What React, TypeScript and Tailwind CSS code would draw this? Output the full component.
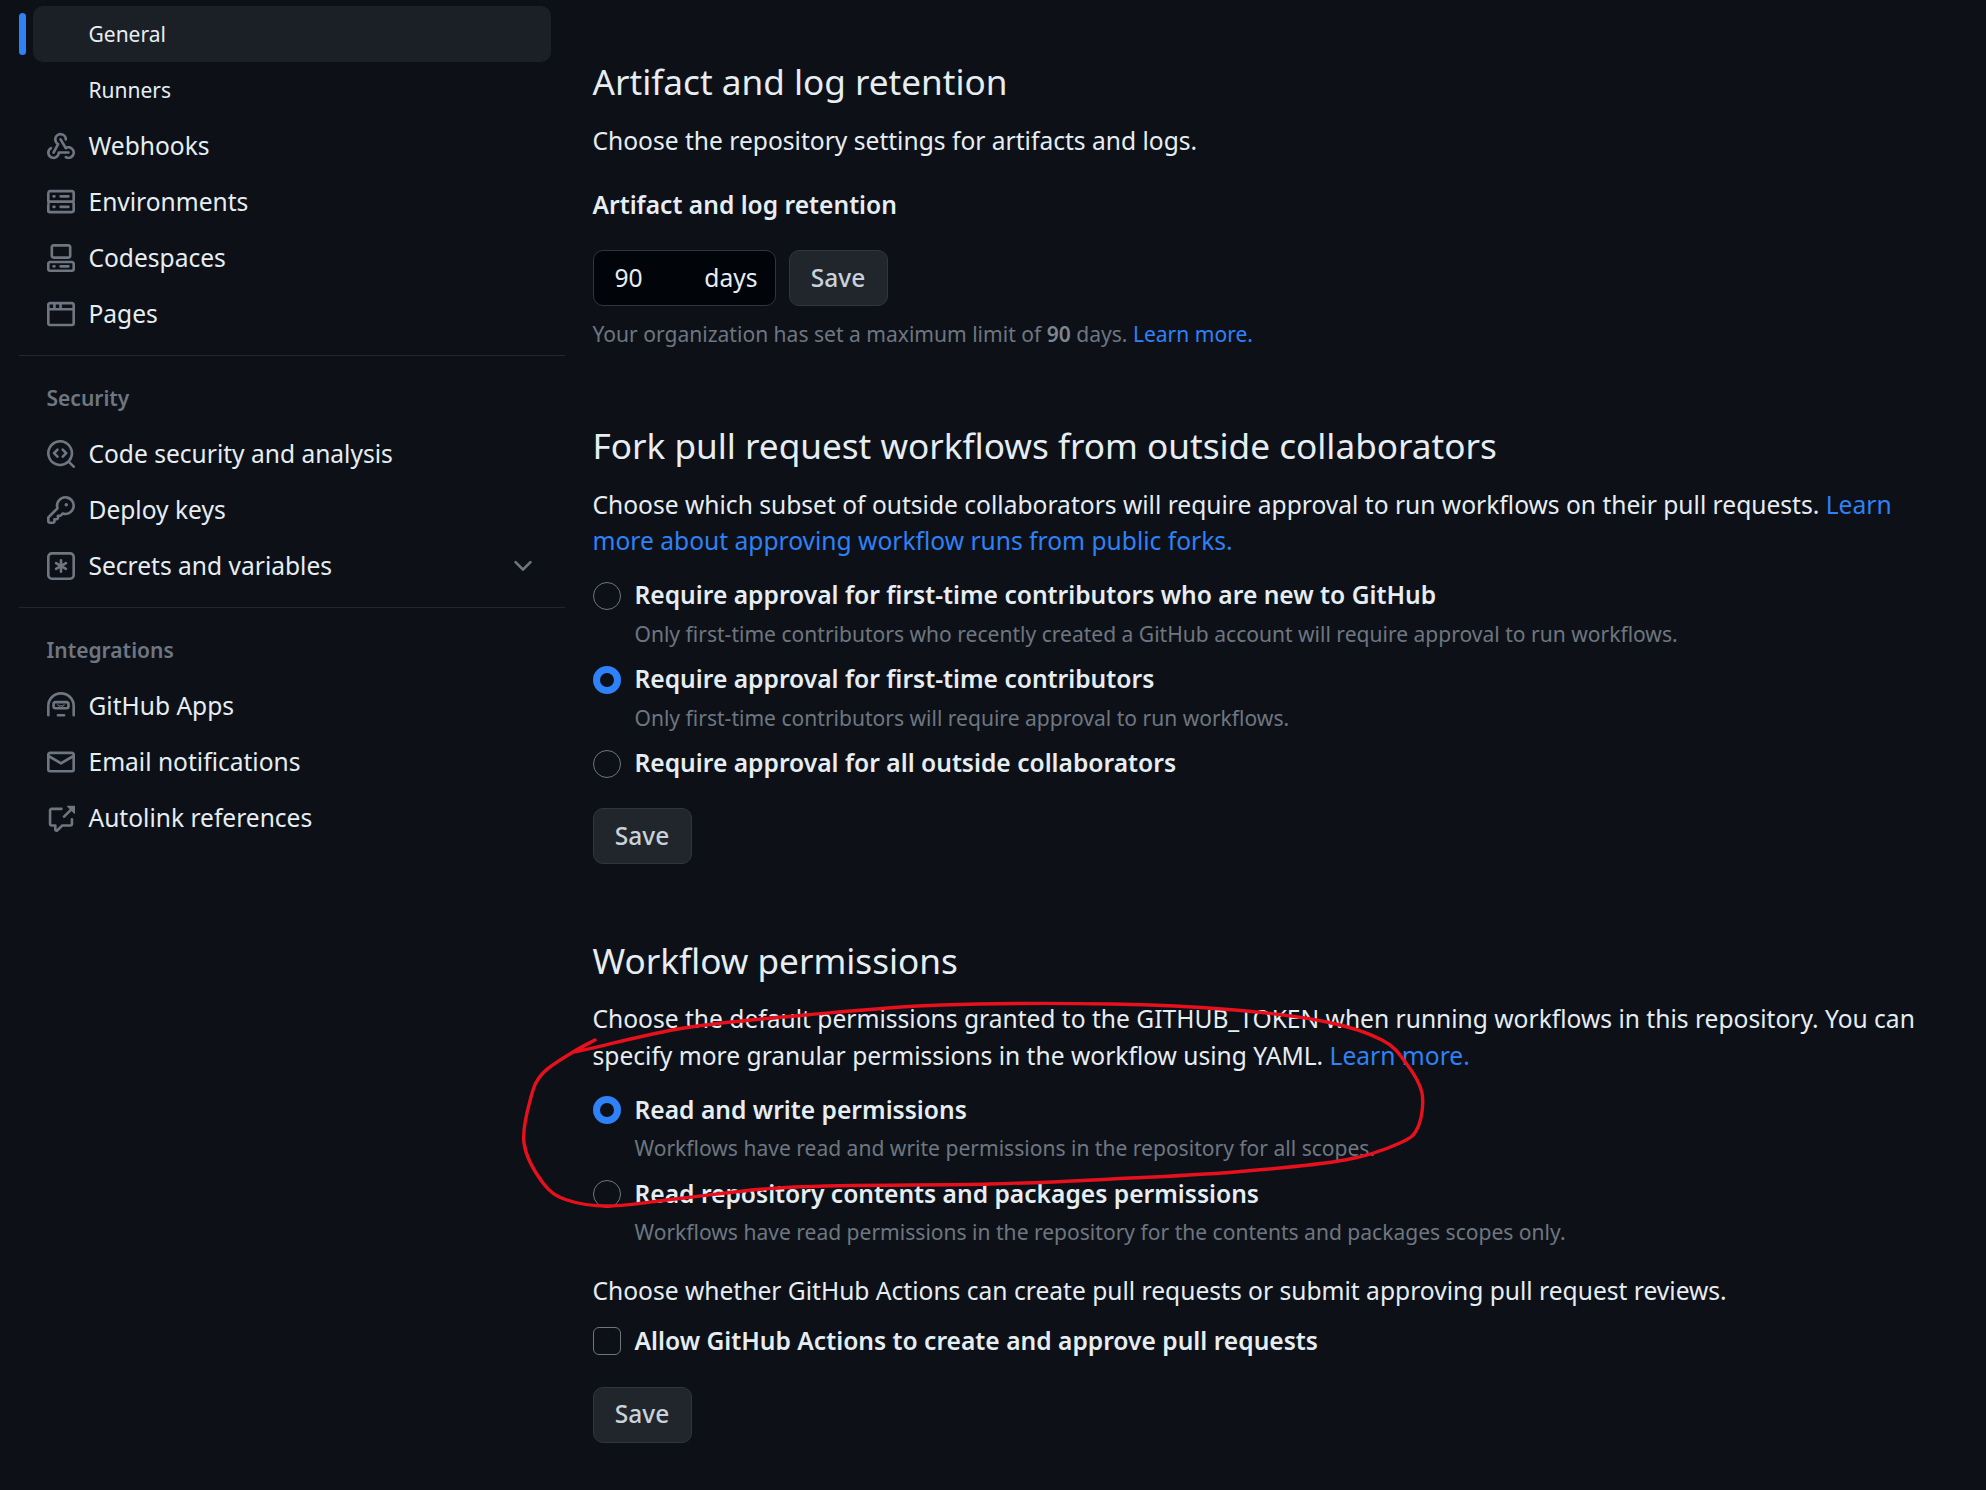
import React from "react";

const pts: [number, number][] = [[595,1040],[573,1052],[684,1028],[806,1015],[941,1005],[1112,1004],[1235,1010],[1327,1022],[1382,1040],[1406,1063],[1422,1093],[1418,1127],[1400,1143],[1345,1160],[1235,1172],[1112,1179],[990,1184],[794,1187],[684,1198],[610,1206],[567,1200],[543,1183],[524,1143],[531,1097],[543,1073],[573,1052],[595,1040]];

function smooth(p: [number, number][]) {
  let d = `M${p[0][0]} ${p[0][1]}`;
  for (let i = 0; i < p.length - 1; i++) {
    const a = p[Math.max(0, i - 1)], b = p[i], c = p[i + 1], e = p[Math.min(p.length - 1, i + 2)];
    if (i < 1) { d += ` L${c[0]} ${c[1]}`; continue; }
    d += ` C${b[0] + (c[0] - a[0]) / 6} ${b[1] + (c[1] - a[1]) / 6} ${c[0] - (e[0] - b[0]) / 6} ${c[1] - (e[1] - b[1]) / 6} ${c[0]} ${c[1]}`;
  }
  return d;
}

const ICONS: Record<string, string[]> = {
  webhook: [
    "M5.5 4.25a2.25 2.25 0 0 1 4.5 0 .75.75 0 0 0 1.5 0 3.75 3.75 0 1 0-6.14 2.889l-2.272 4.258a.75.75 0 0 0 1.324.706L7 7.25a.75.75 0 0 0-.309-1.015A2.25 2.25 0 0 1 5.5 4.25Z",
    "M7.364 3.607a.75.75 0 0 1 1.03.257l2.608 4.349a3.75 3.75 0 1 1-.628 6.785.75.75 0 0 1 .752-1.299 2.25 2.25 0 1 0-.033-3.88.75.75 0 0 1-1.03-.256L7.107 4.636a.75.75 0 0 1 .257-1.03Z",
    "M2.9 8.776A.75.75 0 0 1 2.625 9.8 2.25 2.25 0 1 0 6 11.75a.75.75 0 0 1 .75-.751h5.5a.75.75 0 0 1 0 1.5H7.425a3.751 3.751 0 1 1-5.55-3.998.75.75 0 0 1 1.024.274Z",
  ],
  server: [
    "M1.75 1h12.5c.966 0 1.75.784 1.75 1.75v4c0 .372-.116.717-.314 1 .198.283.314.628.314 1v4a1.75 1.75 0 0 1-1.75 1.75H1.75A1.75 1.75 0 0 1 0 13.75v-4c0-.372.116-.717.314-1a1.745 1.745 0 0 1-.314-1v-4C0 1.784.784 1 1.75 1ZM1.5 2.75v4c0 .138.112.25.25.25h12.5a.25.25 0 0 0 .25-.25v-4a.25.25 0 0 0-.25-.25H1.75a.25.25 0 0 0-.25.25Zm.25 5.75a.25.25 0 0 0-.25.25v4c0 .138.112.25.25.25h12.5a.25.25 0 0 0 .25-.25v-4a.25.25 0 0 0-.25-.25ZM7 4.75A.75.75 0 0 1 7.75 4h4.5a.75.75 0 0 1 0 1.5h-4.5A.75.75 0 0 1 7 4.75ZM7.75 10h4.5a.75.75 0 0 1 0 1.5h-4.5a.75.75 0 0 1 0-1.5ZM3 4.75A.75.75 0 0 1 3.75 4h.5a.75.75 0 0 1 0 1.5h-.5A.75.75 0 0 1 3 4.75ZM3.75 10h.5a.75.75 0 0 1 0 1.5h-.5a.75.75 0 0 1 0-1.5Z",
  ],
  codespaces: [
    "M0 11.25c0-.966.784-1.75 1.75-1.75h12.5c.966 0 1.75.784 1.75 1.75v3A1.75 1.75 0 0 1 14.25 16H1.75A1.75 1.75 0 0 1 0 14.25Zm2-9.5C2 .784 2.784 0 3.75 0h8.5C13.216 0 14 .784 14 1.75v5a1.75 1.75 0 0 1-1.75 1.75h-8.5A1.75 1.75 0 0 1 2 6.75Zm1.75-.25a.25.25 0 0 0-.25.25v5c0 .138.112.25.25.25h8.5a.25.25 0 0 0 .25-.25v-5a.25.25 0 0 0-.25-.25Zm-2 9.5a.25.25 0 0 0-.25.25v3c0 .138.112.25.25.25h12.5a.25.25 0 0 0 .25-.25v-3a.25.25 0 0 0-.25-.25Z",
    "M7 12.75a.75.75 0 0 1 .75-.75h4.5a.75.75 0 0 1 0 1.5h-4.5a.75.75 0 0 1-.75-.75Zm-4 0a.75.75 0 0 1 .75-.75h.5a.75.75 0 0 1 0 1.5h-.5a.75.75 0 0 1-.75-.75Z",
  ],
  browser: [
    "M0 2.75C0 1.784.784 1 1.75 1h12.5c.966 0 1.75.784 1.75 1.75v10.5A1.75 1.75 0 0 1 14.25 15H1.75A1.75 1.75 0 0 1 0 13.25ZM14.5 6h-13v7.25c0 .138.112.25.25.25h12.5a.25.25 0 0 0 .25-.25Zm-6-3.5v2h6V2.75a.25.25 0 0 0-.25-.25ZM5 2.5v2h2v-2Zm-3.25 0a.25.25 0 0 0-.25.25V4.5h2v-2Z",
  ],
  codescan: [
    "M8.47 4.97a.75.75 0 0 0 0 1.06L9.94 7.5 8.47 8.97a.75.75 0 1 0 1.06 1.06l2-2a.75.75 0 0 0 0-1.06l-2-2a.75.75 0 0 0-1.06 0ZM6.53 6.03a.75.75 0 0 0-1.06-1.06l-2 2a.75.75 0 0 0 0 1.06l2 2a.75.75 0 1 0 1.06-1.06L5.06 7.5l1.47-1.47Z",
    "M12.246 13.307a7.501 7.501 0 1 1 1.06-1.06l2.474 2.473a.749.749 0 0 1-.326 1.275.749.749 0 0 1-.734-.215ZM1.5 7.5a6.002 6.002 0 0 0 3.608 5.504 6.002 6.002 0 0 0 6.486-1.117.748.748 0 0 1 .292-.293A6 6 0 1 0 1.5 7.5Z",
  ],
  key: [
    "M10.5 0a5.499 5.499 0 1 1-1.288 10.848l-.932.932a.749.749 0 0 1-.53.22H7v.75a.749.749 0 0 1-.22.53l-.5.5a.749.749 0 0 1-.53.22H5v.75a.749.749 0 0 1-.22.53l-.5.5a.749.749 0 0 1-.53.22h-2A1.75 1.75 0 0 1 0 14.25v-2c0-.199.079-.389.22-.53l4.932-4.932A5.5 5.5 0 0 1 10.5 0Zm-4 5.5c-.001.431.069.86.205 1.269a.75.75 0 0 1-.181.768L1.5 12.56v1.69c0 .138.112.25.25.25h1.69l.06-.06v-1.19a.75.75 0 0 1 .75-.75h1.19l.06-.06v-1.19a.75.75 0 0 1 .75-.75h1.19l1.023-1.025a.75.75 0 0 1 .768-.18A4 4 0 1 0 6.5 5.5ZM11 6a1 1 0 1 1 0-2 1 1 0 0 1 0 2Z",
  ],
  asterisk: [
    "M0 2.75A2.75 2.75 0 0 1 2.75 0h10.5A2.75 2.75 0 0 1 16 2.75v10.5A2.75 2.75 0 0 1 13.25 16H2.75A2.75 2.75 0 0 1 0 13.25Zm2.75-1.25c-.69 0-1.25.56-1.25 1.25v10.5c0 .69.56 1.25 1.25 1.25h10.5c.69 0 1.25-.56 1.25-1.25V2.75c0-.69-.56-1.25-1.25-1.25Z",
    "M8 4a.75.75 0 0 1 .75.75V6.7l1.69-.975a.75.75 0 0 1 .75 1.3L9.5 8l1.69.976a.75.75 0 0 1-.75 1.298L8.75 9.3v1.951a.75.75 0 0 1-1.5 0V9.299l-1.69.975a.75.75 0 0 1-.75-1.298L6.5 8l-1.69-.975a.75.75 0 0 1 .75-1.3l1.69.976V4.75A.75.75 0 0 1 8 4Z",
  ],
  hubot: [
    "M0 8a8 8 0 0 1 16 0v5.25a.75.75 0 0 1-1.5 0V8a6.5 6.5 0 1 0-13 0v5.25a.75.75 0 0 1-1.5 0Z",
    "M3 6.75C3 5.784 3.784 5 4.75 5h6.5c.966 0 1.75.784 1.75 1.75v1.5A1.75 1.75 0 0 1 11.25 10h-6.5A1.75 1.75 0 0 1 3 8.25Zm1.75-.25a.25.25 0 0 0-.25.25v1.5c0 .138.112.25.25.25h6.5a.25.25 0 0 0 .25-.25v-1.5a.25.25 0 0 0-.25-.25Z",
    "M5.4 7.1h1.1l.9.75.6-.5.6.5.9-.75h1.1l-1.9 1.5-.7-.55-.7.55Z",
    "M5.5 13.25a.75.75 0 0 1 .75-.75h3.5a.75.75 0 0 1 0 1.5h-3.5a.75.75 0 0 1-.75-.75Z",
  ],
  mail: [
    "M1.75 2h12.5c.966 0 1.75.784 1.75 1.75v8.5A1.75 1.75 0 0 1 14.25 14H1.75A1.75 1.75 0 0 1 0 12.25v-8.5C0 2.784.784 2 1.75 2ZM1.5 12.251c0 .138.112.25.25.25h12.5a.25.25 0 0 0 .25-.25V5.809L8.38 9.397a.75.75 0 0 1-.76 0L1.5 5.809v6.442Zm13-8.181v-.32a.25.25 0 0 0-.25-.25H1.75a.25.25 0 0 0-.25.25v.32L8 7.88Z",
  ],
  crossref: [
    "M2.75 3.5a.25.25 0 0 0-.25.25v7.5c0 .138.112.25.25.25h2a.75.75 0 0 1 .75.75v2.19l2.72-2.72a.749.749 0 0 1 .53-.22h4.5a.25.25 0 0 0 .25-.25v-2.5a.75.75 0 0 1 1.5 0v2.5A1.75 1.75 0 0 1 13.25 13H9.06l-2.573 2.573A1.458 1.458 0 0 1 4 14.543V13H2.75A1.75 1.75 0 0 1 1 11.25v-7.5C1 2.784 1.784 2 2.75 2h5.5a.75.75 0 0 1 0 1.5ZM16 1.25v4.146a.25.25 0 0 1-.427.177L14.03 4.03l-3.75 3.75a.749.749 0 0 1-1.275-.326.749.749 0 0 1 .215-.734l3.75-3.75-1.543-1.543A.25.25 0 0 1 11.604 1h4.146a.25.25 0 0 1 .25.25Z",
  ],
  chevron: [
    "M12.78 5.22a.749.749 0 0 1 0 1.06l-4.25 4.25a.749.749 0 0 1-1.06 0L3.22 6.28a.749.749 0 1 1 1.06-1.06L8 8.939l3.72-3.719a.749.749 0 0 1 1.06 0Z",
  ],
};

function Octicon({ name, className }: { name: string; className?: string }) {
  return (
    <svg width={28} height={28} viewBox="0 0 16 16" fill="currentColor" className={className}>
      {ICONS[name].map((d, i) => <path key={i} d={d} />)}
    </svg>
  );
}

function NavItem({ icon, label, sub, active, chevron }: { icon?: string; label: string; sub?: boolean; active?: boolean; chevron?: boolean }) {
  return (
    <div className="relative h-14 flex items-center">
      {active && <div className="absolute left-0 top-[7px] w-[7px] h-[42px] rounded-[4px] bg-[#2f81f7]" />}
      <div className={`ml-[14px] w-[518px] h-14 flex items-center rounded-[10px] ${active ? "bg-[#1b2026]" : ""}`}>
        <div className="w-[14px] shrink-0" />
        {icon ? <Octicon name={icon} className="text-[#6e7681] shrink-0" /> : <div className="w-7 shrink-0" />}
        <span className={`ml-[13.5px] text-[#e6edf3] ${sub ? "text-[21px] pt-[2px]" : "text-[24.55px]"}`}>{label}</span>
        {chevron && <Octicon name="chevron" className="ml-auto mr-[14px] text-[#6e7681]" />}
      </div>
    </div>
  );
}

function Divider() {
  return <div className="h-px bg-[#21262d] w-[546px]" />;
}

function SectionLabel({ children }: { children: React.ReactNode }) {
  return <div className="h-[42px] pl-[27.5px] pt-[2px] flex items-center text-[21px] font-semibold text-[#6e7681]">{children}</div>;
}

function Radio({ checked, label, hint }: { checked?: boolean; label: string; hint?: string }) {
  return (
    <div>
      <div className="h-[37px] flex items-center">
        <div className={`w-7 h-7 rounded-full shrink-0 ${checked ? "border-[7px] border-[#2f81f7] bg-[#0d1117]" : "border border-[#6e7681] bg-[#0d1117]"}`} />
        <span className="ml-[14px] text-[24.6px] font-semibold text-[#e6edf3]">{label}</span>
      </div>
      {hint && <div className="h-[40px] mb-[7px] pl-[42px] flex items-center text-[21.06px] text-[#6e7681]">{hint}</div>}
    </div>
  );
}

function SaveBtn() {
  return <div className="h-14 w-[99px] flex items-center justify-center rounded-[10px] border border-[#30363d] bg-[#21262d] text-[24.5px] font-medium text-[#c9d1d9]">Save</div>;
}

function Title({ children }: { children: React.ReactNode }) {
  return <h2 className="text-[35.15px] leading-[52px] text-[#e6edf3]">{children}</h2>;
}

export default function App() {
  return (
    <div className="relative w-[1986px] h-[1490px] overflow-hidden bg-[#0d1117] flex font-['Noto_Sans',sans-serif]">
      <aside className="w-[592.5px] shrink-0 pl-[19px] pt-[6px]">
        <NavItem label="General" sub active />
        <NavItem label="Runners" sub />
        <NavItem icon="webhook" label="Webhooks" />
        <NavItem icon="server" label="Environments" />
        <NavItem icon="codespaces" label="Codespaces" />
        <NavItem icon="browser" label="Pages" />
        <div className="mt-[13px]"><Divider /></div>
        <div className="mt-[21px]"><SectionLabel>Security</SectionLabel></div>
        <div className="mt-[7px]">
          <NavItem icon="codescan" label="Code security and analysis" />
          <NavItem icon="key" label="Deploy keys" />
          <NavItem icon="asterisk" label="Secrets and variables" chevron />
        </div>
        <div className="mt-[13px]"><Divider /></div>
        <div className="mt-[21px]"><SectionLabel>Integrations</SectionLabel></div>
        <div className="mt-[7px]">
          <NavItem icon="hubot" label="GitHub Apps" />
          <NavItem icon="mail" label="Email notifications" />
          <NavItem icon="crossref" label="Autolink references" />
        </div>
      </aside>

      <main className="w-[1342px] text-[24.58px] leading-[36.75px] text-[#e6edf3] pt-[55px]">
        <Title>Artifact and log retention</Title>
        <p className="mt-[16px]">Choose the repository settings for artifacts and logs.</p>
        <div className="mt-[27px] font-semibold">Artifact and log retention</div>
        <div className="mt-[26.5px] flex gap-[13px]">
          <div className="h-14 w-[183px] flex items-center justify-between pl-[21px] pr-[17px] rounded-[10px] border border-[#30363d] bg-[#010409]">
            <span>90</span><span>days</span>
          </div>
          <SaveBtn />
        </div>
        <p className="mt-[9.5px] text-[21.06px] leading-[36px] text-[#6e7681]">Your organization has set a maximum limit of <b className="font-semibold text-[#7d8590]">90</b> days. <span className="text-[#2f81f7]">Learn more.</span></p>

        <div className="mt-[67px]"><Title>Fork pull request workflows from outside collaborators</Title></div>
        <p className="mt-[16px]">Choose which subset of outside collaborators will require approval to run workflows on their pull requests. <span className="text-[#2f81f7]">Learn more about approving workflow runs from public forks.</span></p>
        <div className="mt-[17px]">
          <Radio label="Require approval for first-time contributors who are new to GitHub" hint="Only first-time contributors who recently created a GitHub account will require approval to run workflows." />
          <Radio checked label="Require approval for first-time contributors" hint="Only first-time contributors will require approval to run workflows." />
          <Radio label="Require approval for all outside collaborators" />
        </div>
        <div className="mt-[26px]"><SaveBtn /></div>

        <div className="mt-[70px]"><Title>Workflow permissions</Title></div>
        <p className="mt-[15px]">Choose the default permissions granted to the GITHUB_TOKEN when running workflows in this repository. You can specify more granular permissions in the workflow using YAML. <span className="text-[#2f81f7]">Learn more.</span></p>
        <div className="mt-[17px]">
          <Radio checked label="Read and write permissions" hint="Workflows have read and write permissions in the repository for all scopes." />
          <Radio label="Read repository contents and packages permissions" hint="Workflows have read permissions in the repository for the contents and packages scopes only." />
        </div>
        <p className="mt-[20.5px]">Choose whether GitHub Actions can create pull requests or submit approving pull request reviews.</p>
        <div className="mt-[13px] h-[37px] flex items-center">
          <div className="w-7 h-7 rounded-[6px] border border-[#6e7681] bg-[#0d1117] shrink-0" />
          <span className="ml-[14px] text-[24.6px] font-semibold">Allow GitHub Actions to create and approve pull requests</span>
        </div>
        <div className="mt-[27px]"><SaveBtn /></div>
      </main>

      <svg className="absolute inset-0 pointer-events-none" width="1986" height="1490" fill="none">
        <path d={smooth(pts)} stroke="#e8101c" strokeWidth="3.4" strokeLinecap="round" strokeLinejoin="round" />
      </svg>
    </div>
  );
}
